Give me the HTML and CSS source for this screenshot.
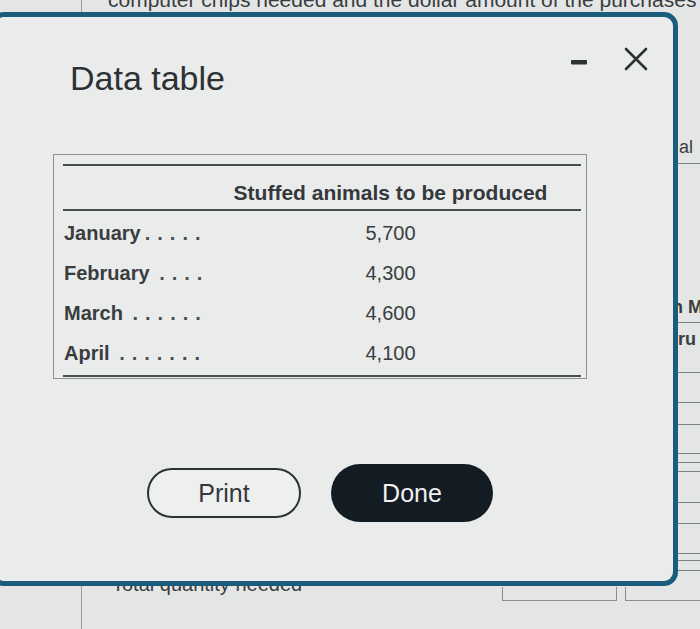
FILE: index.html
```html
<!DOCTYPE html>
<html lang="en">
<head>
<meta charset="utf-8">
<title>Data table</title>
<link rel="stylesheet" href="styles.css">
</head>
<body>
<div class="page">
  <div class="bg-top">computer chips needed and the dollar amount of the purchases</div>
  <div class="bg-right">
    <div class="frag frag-al">al</div>
    <div class="rl r1"></div>
    <div class="frag frag-hm">h M</div>
    <div class="rl r2"></div>
    <div class="frag frag-ru">ru</div>
    <div class="rl r3"></div>
    <div class="rl r4"></div>
    <div class="rl r5"></div>
    <div class="rl r6"></div>
    <div class="rl r7"></div>
    <div class="rl r8"></div>
    <div class="rl r9"></div>
    <div class="rl r10"></div>
    <div class="rl r11"></div>
    <div class="rl r12"></div>
    <div class="rl r13"></div>
  </div>
  <div class="bg-bottom">
    <div class="tq">Total quantity needed</div>
    <div class="inbox inbox-1"></div>
    <div class="inbox inbox-2"></div>
  </div>

  <div class="dialog">
    <div class="dlg-head">
      <h1 class="dlg-title">Data table</h1>
      <svg class="dlg-ctrl" width="80" height="24" viewBox="0 0 80 24" aria-hidden="true">
        <rect x="3" y="13" width="16" height="4.5" rx="1" fill="#2f3235"/>
        <path d="M58 2 L78 22 M78 2 L58 22" stroke="#2f3235" stroke-width="2.6" stroke-linecap="round" fill="none"/>
      </svg>
    </div>

    <div class="tbox">
      <div class="dt">
        <div class="dt-head">
          <div></div>
          <div class="dt-hcell">Stuffed animals to be produced</div>
        </div>
        <div class="dt-body">
          <div class="dt-label">January<span class="dots">.....</span></div>
          <div class="dt-val">5,700</div>
          <div class="dt-label">February <span class="dots">....</span></div>
          <div class="dt-val">4,300</div>
          <div class="dt-label">March <span class="dots">......</span></div>
          <div class="dt-val">4,600</div>
          <div class="dt-label">April <span class="dots">.......</span></div>
          <div class="dt-val">4,100</div>
        </div>
      </div>
    </div>

    <div class="btn-row">
      <button class="btn btn-print">Print</button>
      <button class="btn btn-done">Done</button>
    </div>
  </div>
</div>
</body>
</html>
```

FILE: styles.css
```css
* { box-sizing: border-box; }

html, body {
  margin: 0;
  padding: 0;
}

body {
  width: 700px;
  height: 629px;
  overflow: hidden;
  font-family: "Liberation Sans", Arial, sans-serif;
  color: #33363a;
  background: #e4e6e6;
}

.page {
  position: relative;
  width: 700px;
  height: 629px;
  overflow: hidden;
  display: flex;
  flex-direction: column;
  background:
    linear-gradient(to right, transparent 81px, #9a9c9e 81px, #9a9c9e 82px, transparent 82px),
    #e4e6e6;
}

/* ---------- background page fragments ---------- */
.bg-top {
  margin-top: -12px;
  padding-left: 108px;
  height: 24px;
  flex-shrink: 0;
  font-size: 21px;
  line-height: 24px;
  white-space: nowrap;
  color: #3a3d40;
}

.bg-right {
  margin-left: 678px;
  width: 22px;
  display: flex;
  flex-direction: column;
}

.frag {
  height: 20px;
  font-size: 18px;
  line-height: 20px;
  white-space: nowrap;
  color: #3a3d40;
}
.frag-al { margin-top: 125px; padding-left: 1px; }
.frag-hm { margin-top: 133px; margin-left: -6px; font-weight: bold; }
.frag-ru { margin-top: 6px; font-weight: bold; }

.rl {
  height: 1px;
  background: #7f8285;
  width: 40px;
  flex-shrink: 0;
}
.r1 { margin-top: 6px; }
.r2 { margin-top: 5px; }
.r3 { margin-top: 23px; }
.r4 { margin-top: 29px; }
.r5 { margin-top: 21px; }
.r6 { margin-top: 28px; }
.r7 { margin-top: 8px; }
.r8 { margin-top: 8px; }
.r9 { margin-top: 30px; }
.r10 { margin-top: 20px; }
.r11 { margin-top: 29px; }
.r12 { margin-top: 6px; }
.r13 { margin-top: 9px; }

.bg-bottom {
  margin-top: auto;
  padding-bottom: 28px;
  display: flex;
  align-items: flex-start;
  height: 56px;
  flex-shrink: 0;
}

.tq {
  flex-shrink: 0;
  margin-left: 112px;
  width: 390px;
  font-size: 20px;
  line-height: 20px;
  padding-top: 1px;
  color: #3a3d40;
  white-space: nowrap;
}

.inbox {
  flex-shrink: 0;
  margin-top: 14px;
  height: 14px;
  border: 1px solid #8a8c8e;
  border-top: none;
}
.inbox-1 { width: 115px; }
.inbox-2 { width: 90px; margin-left: 8px; }

/* ---------- dialog ---------- */
.dialog {
  position: absolute;
  top: 12px;
  left: -10px;
  width: 688px;
  height: 574px;
  border: 5px solid #1b5c7c;
  border-radius: 14px;
  background: #eaebeb;
  padding: 30px 25px 0 0;
  display: flex;
  flex-direction: column;
}

.dlg-head {
  display: flex;
  justify-content: space-between;
  align-items: flex-start;
}

.dlg-title {
  margin: 11px 0 0 75px;
  font-size: 34px;
  line-height: 40px;
  font-weight: normal;
  color: #2e3134;
}

.dlg-ctrl { display: block; }

.tbox {
  margin: 56px 0 0 58px;
  width: 534px;
  height: 225px;
  border: 1px solid #8e9092;
}

.dt {
  margin: 9px 5px 1px 9px;
  border-top: 2px solid #4a4d50;
  border-bottom: 2px solid #4a4d50;
}

.dt-head {
  display: grid;
  grid-template-columns: 137px 1fr;
  height: 45px;
  padding-bottom: 4px;
  align-items: end;
  border-bottom: 2px solid #4a4d50;
}

.dt-hcell {
  text-align: center;
  font-size: 21px;
  line-height: 24px;
  font-weight: bold;
  color: #35383b;
}

.dt-body {
  display: grid;
  grid-template-columns: 137px 1fr;
  grid-auto-rows: 40px;
  padding: 2px 0 2px;
  align-items: center;
}

.dt-label {
  padding-left: 1px;
  font-size: 20px;
  font-weight: bold;
  color: #3a3d40;
  white-space: nowrap;
}

.dots {
  margin-left: 4px;
  letter-spacing: 7px;
  color: #4a4d50;
}

.dt-val {
  text-align: center;
  font-size: 20px;
  color: #3a3d40;
}

.btn-row {
  margin: 85px 0 0 152px;
  display: flex;
  align-items: center;
  gap: 30px;
}

.btn {
  font-family: "Liberation Sans", Arial, sans-serif;
  font-size: 25px;
  border-radius: 30px;
  padding: 0;
  cursor: pointer;
}

.btn-print {
  width: 154px;
  height: 50px;
  border: 2px solid #2f3235;
  background: #eeefef;
  color: #35383b;
}

.btn-done {
  width: 162px;
  height: 58px;
  border: none;
  background: #131b23;
  color: #f0f0f0;
}
```
